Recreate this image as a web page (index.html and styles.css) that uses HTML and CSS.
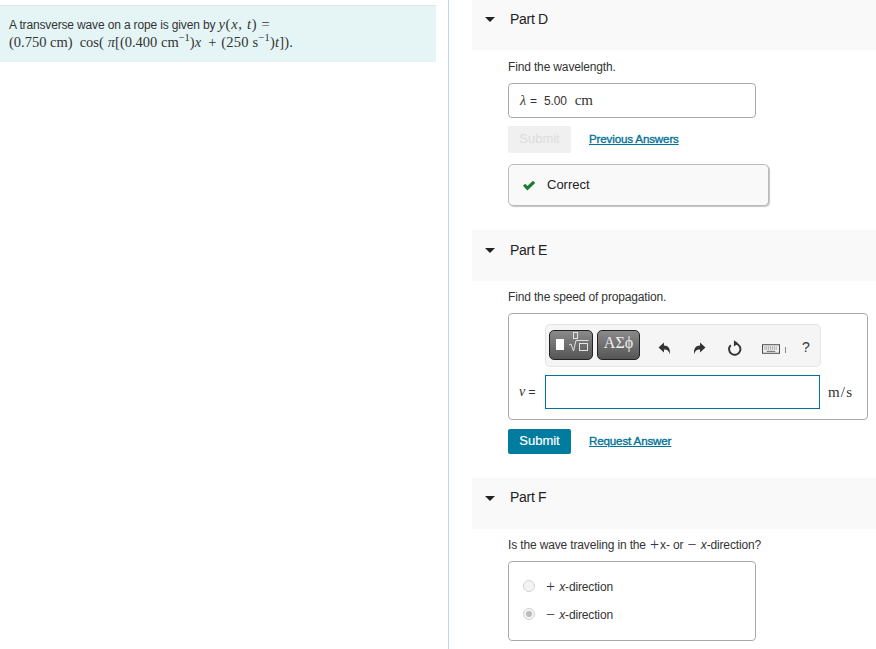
FILE: index.html
```html
<!DOCTYPE html>
<html lang="en">
<head>
<meta charset="utf-8">
<title>Transverse wave</title>
<link rel="stylesheet" href="styles.css">
</head>
<body>
<div class="page">
  <aside class="left">
    <div class="statement">
      <p class="line">A transverse wave on a rope is given by <span class="math m1"><i>y</i>(<i>x</i>, <i>t</i>) =</span></p>
      <p class="line math-line"><span class="math">(0.750 cm)</span><span class="math cos">cos(</span><span class="math pi"><i>π</i>[(0.400 cm<sup>−1</sup>)<i>x</i></span><span class="math op">+</span><span class="math tail">(250 s<sup>−1</sup>)<i>t</i>]).</span></p>
    </div>
  </aside>
  <main class="right">
    <section class="part part-d">
      <header class="part-head"><span class="caret"></span><span class="part-title">Part D</span></header>
      <div class="part-body">
        <p class="prompt">Find the wavelength.</p>
        <div class="answer-box"><span class="math lam"><i>λ</i></span><span class="eq">=</span><span class="val">5.00</span><span class="math unit">cm</span></div>
        <div class="actions">
          <button class="btn btn-off">Submit</button>
          <a class="link" href="#">Previous Answers</a>
        </div>
        <div class="feedback">
          <svg class="check" width="14" height="11" viewBox="0 0 14 11"><path d="M1 5.800 L3.200 3.800 L5.400 6 L11 .8 L13.200 2.900 L5.400 10.400 Z" fill="#1c7a32"/></svg>
          <span>Correct</span>
        </div>
      </div>
    </section>
    <section class="part part-e">
      <header class="part-head"><span class="caret"></span><span class="part-title">Part E</span></header>
      <div class="part-body">
        <p class="prompt">Find the speed of propagation.</p>
        <div class="editor">
          <div class="toolbar">
            <span class="tool tool-a">
              <svg width="42" height="28" viewBox="0 0 42 28">
                <rect x="6" y="8" width="8" height="11" fill="#fff"/>
                <g fill="none" stroke="#e2e2e2" stroke-width="1">
                  <rect x="23.500" y="1.500" width="4" height="6"/>
                  <path d="M19 14 L21 13 L23.500 20 L26 9.500 H38.500"/>
                  <rect x="29.500" y="12.500" width="8" height="7"/>
                </g>
              </svg>
            </span>
            <span class="tool tool-b">ΑΣϕ</span>
            <svg class="ico ico-undo" width="13" height="13" viewBox="0 0 12 12"><path d="M.5 5 L5.500 .5 V3.300 C9.500 3.300 11.500 6 11 11.500 C10 8 8.500 7 5.500 7 V9.700 Z" fill="#333"/></svg>
            <svg class="ico ico-redo" width="13" height="13" viewBox="0 0 12 12"><path d="M11.500 5 L6.500 .5 V3.300 C2.500 3.300 .5 6 1 11.500 C2 8 3.500 7 6.500 7 V9.700 Z" fill="#333"/></svg>
            <svg class="ico ico-reset" width="15" height="16" viewBox="0 0 14 15"><path d="M8.300 3.400 A5.300 5.300 0 1 1 3.500 4.800" fill="none" stroke="#333" stroke-width="1.800"/><path d="M6.500 .3 L10.500 3 L6.500 6 Z" fill="#333"/></svg>
            <svg class="ico ico-kbd" width="18" height="10" viewBox="0 0 19 10"><rect x=".5" y=".5" width="18" height="9" fill="#eee" stroke="#444"/><path d="M2.500 3 H16.500 M2.500 5 H16.500" stroke="#666" stroke-dasharray="1 1"/><path d="M5 7.500 H14" stroke="#666"/></svg>
            <span class="sep"></span>
            <span class="help">?</span>
          </div>
          <div class="input-row">
            <span class="var"><i class="math">v</i> =</span>
            <span class="field"></span>
            <span class="math units">m/s</span>
          </div>
        </div>
        <div class="actions actions-e">
          <button class="btn btn-on">Submit</button>
          <a class="link" href="#">Request Answer</a>
        </div>
      </div>
    </section>
    <section class="part part-f">
      <header class="part-head"><span class="caret"></span><span class="part-title">Part F</span></header>
      <div class="part-body">
        <p class="prompt">Is the wave traveling in the <span class="math sign">+</span><span class="x">x</span>- or <span class="math sign">−</span> <i>x</i>-direction?</p>
        <div class="choices">
          <div class="choice"><span class="radio"></span><span class="choice-label"><span class="math sign">+</span> <i>x</i>-direction</span></div>
          <div class="choice"><span class="radio radio-on"></span><span class="choice-label"><span class="math sign">−</span> <i>x</i>-direction</span></div>
        </div>
      </div>
    </section>
  </main>
</div>
</body>
</html>
```
FILE: styles.css
```css
* { box-sizing: border-box; }
html, body { margin: 0; padding: 0; background: #fff; }
body { font-family: "Liberation Sans", Arial, sans-serif; font-size: 12px; letter-spacing: -.15px; color: #333; overflow: hidden; }
p { margin: 0; }
.page { display: flex; width: 876px; height: 649px; overflow: hidden; }
.left { width: 449px; flex: none; border-right: 1px solid #c3d4e6; padding-top: 5px; }
.statement { width: 436px; height: 57px; background: #e5f5f6; border-top: 1px solid #dde6e8; padding: 10px 0 0 9px; }
.line { height: 17px; line-height: 17px; white-space: nowrap; color: #333; }
.math-line { margin-top: 1px; }
.math { font-family: "Liberation Serif", "Times New Roman", serif; letter-spacing: 0; }
.statement .math { font-size: 14.500px; }
.statement .m1 { letter-spacing: .7px; }
.statement .cos { margin-left: 7px; }
.statement .pi { margin-left: 4px; }
.statement .op { margin: 0 5px 0 7px; }
.statement .tail { letter-spacing: .2px; }
sup { font-size: 10.500px; line-height: 0; }
.right { flex: 1; min-width: 0; padding-left: 23px; }
.part-d { margin-top: -1px; }
.part-head { height: 51px; background: #f9f9f9; display: flex; align-items: flex-start; padding: 12px 0 0 13px; }
.caret { width: 0; height: 0; border-left: 5px solid transparent; border-right: 5px solid transparent; border-top: 5px solid #222; margin-top: 6px; }
.part-title { font-size: 14px; letter-spacing: -.3px; line-height: 16px; margin-left: 15px; color: #222; }
.part-body { padding-left: 36px; }
.prompt { height: 14px; line-height: 14px; margin-top: 9px; color: #333; white-space: nowrap; }
.part-d .prompt { margin-top: 10px; }
.sign { font-size: 16px; line-height: 0; color: #335; margin: 0 1px; vertical-align: -1px; }
.answer-box { width: 248px; height: 35px; margin-top: 10px; border: 1px solid #aaa; border-radius: 4px; display: flex; align-items: center; padding-left: 11px; }
.part-d .answer-box { margin-top: 9px; }
.lam { font-size: 14px; }
.eq { margin-left: 4px; }
.val { margin-left: 7px; }
.unit { font-size: 15px; margin-left: 8px; }
.actions { display: flex; align-items: center; margin-top: 8px; }
.btn { width: 63px; height: 27px; border: 0; border-radius: 2px; font-family: inherit; font-size: 13px; padding: 0 0 2px; }
.btn-off { background: #f0f0f0; color: #dcdcdc; }
.btn-on { background: #007c9e; color: #fff; height: 25px; -webkit-text-stroke: .2px #fff; }
.link { margin: -3px 0 0 18px; color: #007398; font-size: 11.600px; -webkit-text-stroke: .35px #007398; }
.feedback { width: 261px; height: 42px; margin-top: 11px; background: #f9f9f9; border: 1px solid #bbb; border-radius: 5px; box-shadow: 1px 1px 1px #c4c4c4; display: flex; align-items: center; padding: 0 0 2px 13px; font-size: 13px; letter-spacing: 0; color: #222; }
.check { margin: 2px 11px 0 0; }
.part-e { margin-top: 24px; }
.editor { width: 360px; height: 107px; margin-top: 9px; border: 1px solid #aaa; border-radius: 4px; padding: 10px 0 0 36px; }
.toolbar { width: 276px; height: 43px; background: #f5f5f5; border: 1px solid #e4e4e4; border-radius: 5px; display: flex; align-items: flex-start; padding: 5px 0 0 3px; }
.tool { height: 30px; border-radius: 5px; border: 1px solid #222; background: linear-gradient(#8a8a8a, #555); color: #eee; display: flex; align-items: center; justify-content: center; }
.tool-a { width: 44px; }
.tool-b { width: 43px; margin-left: 4px; font-family: "Liberation Serif", serif; font-size: 16px; letter-spacing: 0; padding-bottom: 5px; }
.ico { flex: none; }
.ico-undo { margin: 12px 0 0 18px; }
.ico-redo { margin: 12px 0 0 22px; }
.ico-reset { margin: 10px 0 0 21px; }
.ico-kbd { margin: 14px 0 0 20px; }
.sep { width: 1px; height: 6px; background: #888; margin: 17px 0 0 5px; }
.help { margin: 9px 0 0 16px; font-size: 14px; color: #333; }
.input-row { display: flex; align-items: center; margin: 8px 0 0 -26px; height: 34px; }
.var { width: 26px; font-size: 12px; }
.var .math { font-size: 14px; }
.field { width: 275px; height: 34px; border: 1px solid #007398; background: #fff; }
.units { margin-left: 8px; font-size: 15px; letter-spacing: 1.200px; }
.actions-e { margin-top: 9px; }
.part-f { margin-top: 24px; }
.part-f .part-head { padding-top: 11px; }
.part-f .caret { margin-top: 7px; }
.x { font-size: 12px; }
.choices { width: 248px; height: 80px; margin-top: 9px; border: 1px solid #aaa; border-radius: 4px; padding: 10px 0 0 14px; }
.choice { display: flex; align-items: center; height: 28px; }
.choice-label { padding-top: 2px; }
.radio { position: relative; width: 12px; height: 12px; border-radius: 50%; border: 1px solid #d2d2d2; background: #f4f4f4; margin-right: 10px; flex: none; }
.radio-on::after { content: ""; position: absolute; left: 2px; top: 2px; width: 6px; height: 6px; border-radius: 50%; background: #bbb; }
```
